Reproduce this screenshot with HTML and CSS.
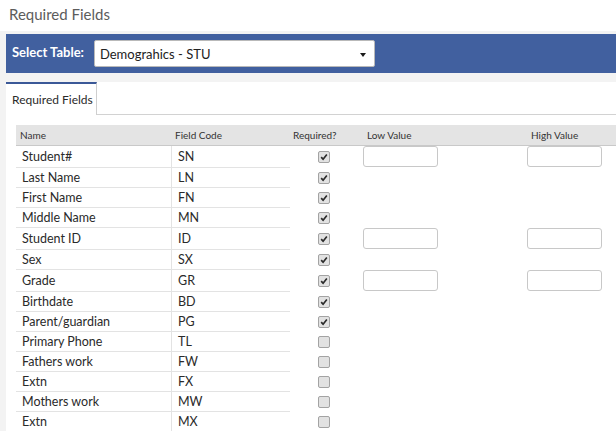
FILE: index.html
```html
<!DOCTYPE html>
<html lang="en">
<head>
<meta charset="utf-8">
<title>Required Fields</title>
<link rel="stylesheet" href="styles.css">
</head>
<body>
<header class="title">Required Fields</header>
<main class="page">
  <div class="toolbar">
    <span class="toolbar-label">Select Table:</span>
    <div class="select">
      <span class="select-value">Demograhics - STU</span>
      <span class="select-arrow"></span>
    </div>
  </div>
  <section class="panel">
    <div class="tabs">
      <div class="tab tab-active">Required Fields</div>
    </div>
    <table class="fields">
      <colgroup>
        <col class="c-name">
        <col class="c-code">
        <col class="c-req">
        <col class="c-low">
        <col class="c-high">
      </colgroup>
      <thead>
        <tr>
          <th class="h-name">Name</th>
          <th class="h-code">Field Code</th>
          <th class="h-req">Required?</th>
          <th class="h-val">Low Value</th>
          <th class="h-val">High Value</th>
        </tr>
      </thead>
      <tbody>
        <tr><td class="d-name">Student#</td><td class="d-code">SN</td><td class="d-req"><span class="chk on"><svg viewBox="0 0 12 12"><path d="M2.6 6.2 L4.9 8.6 L9.4 2.9"/></svg></span></td><td class="d-val"><input class="val" type="text"></td><td class="d-val"><input class="val" type="text"></td></tr>
        <tr><td class="d-name">Last Name</td><td class="d-code">LN</td><td class="d-req"><span class="chk on"><svg viewBox="0 0 12 12"><path d="M2.6 6.2 L4.9 8.6 L9.4 2.9"/></svg></span></td><td></td><td></td></tr>
        <tr><td class="d-name">First Name</td><td class="d-code">FN</td><td class="d-req"><span class="chk on"><svg viewBox="0 0 12 12"><path d="M2.6 6.2 L4.9 8.6 L9.4 2.9"/></svg></span></td><td></td><td></td></tr>
        <tr><td class="d-name">Middle Name</td><td class="d-code">MN</td><td class="d-req"><span class="chk on"><svg viewBox="0 0 12 12"><path d="M2.6 6.2 L4.9 8.6 L9.4 2.9"/></svg></span></td><td></td><td></td></tr>
        <tr><td class="d-name">Student ID</td><td class="d-code">ID</td><td class="d-req"><span class="chk on"><svg viewBox="0 0 12 12"><path d="M2.6 6.2 L4.9 8.6 L9.4 2.9"/></svg></span></td><td class="d-val"><input class="val" type="text"></td><td class="d-val"><input class="val" type="text"></td></tr>
        <tr><td class="d-name">Sex</td><td class="d-code">SX</td><td class="d-req"><span class="chk on"><svg viewBox="0 0 12 12"><path d="M2.6 6.2 L4.9 8.6 L9.4 2.9"/></svg></span></td><td></td><td></td></tr>
        <tr><td class="d-name">Grade</td><td class="d-code">GR</td><td class="d-req"><span class="chk on"><svg viewBox="0 0 12 12"><path d="M2.6 6.2 L4.9 8.6 L9.4 2.9"/></svg></span></td><td class="d-val"><input class="val" type="text"></td><td class="d-val"><input class="val" type="text"></td></tr>
        <tr><td class="d-name">Birthdate</td><td class="d-code">BD</td><td class="d-req"><span class="chk on"><svg viewBox="0 0 12 12"><path d="M2.6 6.2 L4.9 8.6 L9.4 2.9"/></svg></span></td><td></td><td></td></tr>
        <tr><td class="d-name">Parent/guardian</td><td class="d-code">PG</td><td class="d-req"><span class="chk on"><svg viewBox="0 0 12 12"><path d="M2.6 6.2 L4.9 8.6 L9.4 2.9"/></svg></span></td><td></td><td></td></tr>
        <tr><td class="d-name">Primary Phone</td><td class="d-code">TL</td><td class="d-req"><span class="chk"></span></td><td></td><td></td></tr>
        <tr><td class="d-name">Fathers work</td><td class="d-code">FW</td><td class="d-req"><span class="chk"></span></td><td></td><td></td></tr>
        <tr><td class="d-name">Extn</td><td class="d-code">FX</td><td class="d-req"><span class="chk"></span></td><td></td><td></td></tr>
        <tr><td class="d-name">Mothers work</td><td class="d-code">MW</td><td class="d-req"><span class="chk"></span></td><td></td><td></td></tr>
        <tr><td class="d-name">Extn</td><td class="d-code">MX</td><td class="d-req"><span class="chk"></span></td><td></td><td></td></tr>
      </tbody>
    </table>
  </section>
</main>
</body>
</html>
```
FILE: styles.css
```css
html, body {
  margin: 0;
  padding: 0;
}
body {
  background: #f3f3f3;
  font-family: Lato, "Open Sans", "Liberation Sans", sans-serif;
  color: #2a2a2a;
  overflow: hidden;
}
.title {
  background: #ffffff;
  height: 31px;
  box-sizing: border-box;
  padding: 5px 0 0 9px;
  font-size: 15px;
  line-height: 18px;
  color: #5c5c5c;
}
.page {
  padding: 3px 0 0 6px;
}
.toolbar {
  background: #41609f;
  height: 39px;
  display: flex;
  align-items: center;
  gap: 10px;
  padding-left: 6px;
}
.toolbar-label {
  color: #ffffff;
  font-size: 13px;
  font-weight: bold;
  margin-top: -3px;
}
.select {
  position: relative;
  width: 281px;
  height: 27px;
  box-sizing: border-box;
  background: #ffffff;
  border: 1px solid #b9b9b9;
  border-radius: 2px;
  display: flex;
  align-items: center;
  padding-left: 5px;
  font-size: 13px;
  color: #222;
}
.select-arrow {
  position: absolute;
  right: 8px;
  top: 12px;
  width: 0;
  height: 0;
  border-left: 3px solid transparent;
  border-right: 3px solid transparent;
  border-top: 4px solid #1a1a1a;
}
.panel {
  background: #ffffff;
  margin-top: 9px;
  min-height: 360px;
}
.tabs {
  display: flex;
  border-bottom: 1px solid #d2d2d2;
  height: 32px;
}
.tab {
  box-sizing: border-box;
  width: 91px;
  height: 33px;
  border-top: 2px solid #3b5897;
  border-right: 1px solid #cfcfcf;
  background: #ffffff;
  padding: 9px 0 0 6px;
  font-size: 12px;
  line-height: 14px;
  color: #2a2a2a;
}
.fields {
  margin: 10px 0 0 10px;
  width: 600px;
  table-layout: fixed;
  border-collapse: separate;
  border-spacing: 0;
  font-size: 12.5px;
}
.c-name { width: 156px; }
.c-code { width: 118px; }
.c-req { width: 70px; }
.c-low { width: 164px; }
.c-high { width: 92px; }
.fields th {
  height: 20px;
  padding: 0;
  background: #e4e4e4;
  border-bottom: 1px solid #c9c9c9;
  font-size: 10px;
  font-weight: normal;
  text-align: left;
  color: #333;
  vertical-align: middle;
}
.h-name { padding-left: 4px !important; }
.h-code { padding-left: 3px !important; }
.h-req { padding-left: 3px !important; }
.h-val { padding-left: 7px !important; }
.fields td {
  padding: 0;
  line-height: 19px;
  vertical-align: middle;
}
.d-name {
  padding-left: 6px !important;
  border-bottom: 1px solid #e3e3e3;
  border-right: 1px solid #e3e3e3;
}
.d-code {
  padding-left: 6px !important;
  border-bottom: 1px solid #e3e3e3;
}
.d-req {
  text-align: center;
  padding-right: 2px !important;
}
.chk {
  display: inline-block;
  width: 12px;
  height: 12px;
  box-sizing: border-box;
  border: 1px solid #a3a3a3;
  border-radius: 2px;
  background: #e2e2e2;
  vertical-align: middle;
  margin-top: -3px;
}
.chk svg {
  display: block;
  width: 10px;
  height: 10px;
}
.chk svg path {
  fill: none;
  stroke: #2b2b2b;
  stroke-width: 2;
}
.d-val {
  vertical-align: top !important;
}
.val {
  display: block;
  box-sizing: border-box;
  width: 75px;
  height: 21px;
  margin: 0 0 1px 3px;
  border: 1px solid #c8c8c8;
  border-radius: 3px;
  background: #ffffff;
  padding: 0;
}
```
